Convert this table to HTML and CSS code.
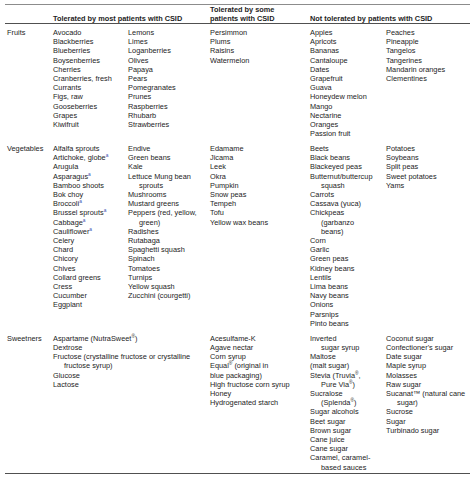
FILE: index.html
```html
<!DOCTYPE html>
<html lang="en">
<head>
<meta charset="utf-8">
<title>CSID tolerance table</title>
<link rel="stylesheet" href="styles.css">
</head>
<body>
<div class="table">
  <div class="grid head">
    <div class="cat"></div>
    <div class="span2">Tolerated by most patients with CSID</div>
    <div>Tolerated by some<br>patients with CSID</div>
    <div class="span2">Not tolerated by patients with CSID</div>
  </div>

  <div class="grid row first">
    <div class="cat">Fruits</div>
    <div class="list">
      <div>Avocado</div><div>Blackberries</div><div>Blueberries</div><div>Boysenberries</div><div>Cherries</div><div>Cranberries, fresh</div><div>Currants</div><div>Figs, raw</div><div>Gooseberries</div><div>Grapes</div><div>Kiwifruit</div>
    </div>
    <div class="list">
      <div>Lemons</div><div>Limes</div><div>Loganberries</div><div>Olives</div><div>Papaya</div><div>Pears</div><div>Pomegranates</div><div>Prunes</div><div>Raspberries</div><div>Rhubarb</div><div>Strawberries</div>
    </div>
    <div class="list">
      <div>Persimmon</div><div>Plums</div><div>Raisins</div><div>Watermelon</div>
    </div>
    <div class="list">
      <div>Apples</div><div>Apricots</div><div>Bananas</div><div>Cantaloupe</div><div>Dates</div><div>Grapefruit</div><div>Guava</div><div>Honeydew melon</div><div>Mango</div><div>Nectarine</div><div>Oranges</div><div>Passion fruit</div>
    </div>
    <div class="list">
      <div>Peaches</div><div>Pineapple</div><div>Tangelos</div><div>Tangerines</div><div>Mandarin oranges</div><div>Clementines</div>
    </div>
  </div>

  <div class="grid row">
    <div class="cat">Vegetables</div>
    <div class="list">
      <div>Alfalfa sprouts</div><div>Artichoke, globe<sup class="fn">a</sup></div><div>Arugula</div><div>Asparagus<sup class="fn">a</sup></div><div>Bamboo shoots</div><div>Bok choy</div><div>Broccoli<sup class="fn">a</sup></div><div>Brussel sprouts<sup class="fn">a</sup></div><div>Cabbage<sup class="fn">a</sup></div><div>Cauliflower<sup class="fn">a</sup></div><div>Celery</div><div>Chard</div><div>Chicory</div><div>Chives</div><div>Collard greens</div><div>Cress</div><div>Cucumber</div><div>Eggplant</div>
    </div>
    <div class="list">
      <div>Endive</div><div>Green beans</div><div>Kale</div><div>Lettuce Mung bean<br>sprouts</div><div>Mushrooms</div><div>Mustard greens</div><div>Peppers (red, yellow,<br>green)</div><div>Radishes</div><div>Rutabaga</div><div>Spaghetti squash</div><div>Spinach</div><div>Tomatoes</div><div>Turnips</div><div>Yellow squash</div><div>Zucchini (courgetti)</div>
    </div>
    <div class="list">
      <div>Edamame</div><div>Jicama</div><div>Leek</div><div>Okra</div><div>Pumpkin</div><div>Snow peas</div><div>Tempeh</div><div>Tofu</div><div>Yellow wax beans</div>
    </div>
    <div class="list">
      <div>Beets</div><div>Black beans</div><div>Blackeyed peas</div><div>Butternut/buttercup<br>squash</div><div>Carrots</div><div>Cassava (yuca)</div><div>Chickpeas<br>(garbanzo<br>beans)</div><div>Corn</div><div>Garlic</div><div>Green peas</div><div>Kidney beans</div><div>Lentils</div><div>Lima beans</div><div>Navy beans</div><div>Onions</div><div>Parsnips</div><div>Pinto beans</div>
    </div>
    <div class="list">
      <div>Potatoes</div><div>Soybeans</div><div>Split peas</div><div>Sweet potatoes</div><div>Yams</div>
    </div>
  </div>

  <div class="grid row last">
    <div class="cat">Sweetners</div>
    <div class="list span2">
      <div>Aspartame (NutraSweet<sup class="reg">®</sup>)</div><div>Dextrose</div><div>Fructose (crystalline fructose or crystalline<br>fructose syrup)</div><div>Glucose</div><div>Lactose</div>
    </div>
    <div class="list">
      <div>Acesulfame-K</div><div>Agave nectar</div><div>Corn syrup</div><div>Equal<sup class="reg">®</sup> (original in</div><div>blue packaging)</div><div>High fructose corn syrup</div><div>Honey</div><div>Hydrogenated starch</div>
    </div>
    <div class="list">
      <div>Inverted<br>sugar syrup</div><div>Maltose</div><div>(malt sugar)</div><div>Stevia (Truvia<sup class="reg">®</sup>,<br>Pure Via<sup class="reg">®</sup>)</div><div>Sucralose<br>(Splenda<sup class="reg">®</sup>)</div><div>Sugar alcohols</div><div>Beet sugar</div><div>Brown sugar</div><div>Cane juice</div><div>Cane sugar</div><div>Caramel, caramel-<br>based sauces</div>
    </div>
    <div class="list">
      <div>Coconut sugar</div><div>Confectioner's sugar</div><div>Date sugar</div><div>Maple syrup</div><div>Molasses</div><div>Raw sugar</div><div>Sucanat™ (natural cane<br>sugar)</div><div>Sucrose</div><div>Sugar</div><div>Turbinado sugar</div>
    </div>
  </div>
</div>
</body>
</html>
```

FILE: styles.css
```css
html, body {
  background: #ffffff;
}

body {
  margin: 0;
  padding: 4px 4px 0 5px;
  font-family: "Liberation Sans", Arial, sans-serif;
  font-size: 7.35px;
  color: #1d1d1d;
}

.table {
  width: 465px;
  border-top: 1.5px solid #8c8c8c;
  border-bottom: 1.5px solid #505050;
}

.grid {
  display: grid;
  grid-template-columns: 48px 75px 82px 100px 76px 84px;
}

.head {
  align-items: end;
  font-weight: bold;
  line-height: 9px;
  border-bottom: 1px solid #505050;
  white-space: nowrap;
}

.span2 {
  grid-column: span 2;
}

.row {
  align-items: start;
  line-height: 9.2px;
  padding-top: 5.6px;
}

.row.first {
  padding-top: 4px;
}

.row.last {
  padding-bottom: 1px;
}

.cat {
  padding-left: 2px;
  white-space: nowrap;
}

.list > div {
  white-space: nowrap;
  padding-left: 11px;
  text-indent: -11px;
}

.fn,
.reg {
  font-size: 4.8px;
  line-height: 0;
  vertical-align: 2.6px;
}

.fn {
  color: #3d4fb3;
}
```
